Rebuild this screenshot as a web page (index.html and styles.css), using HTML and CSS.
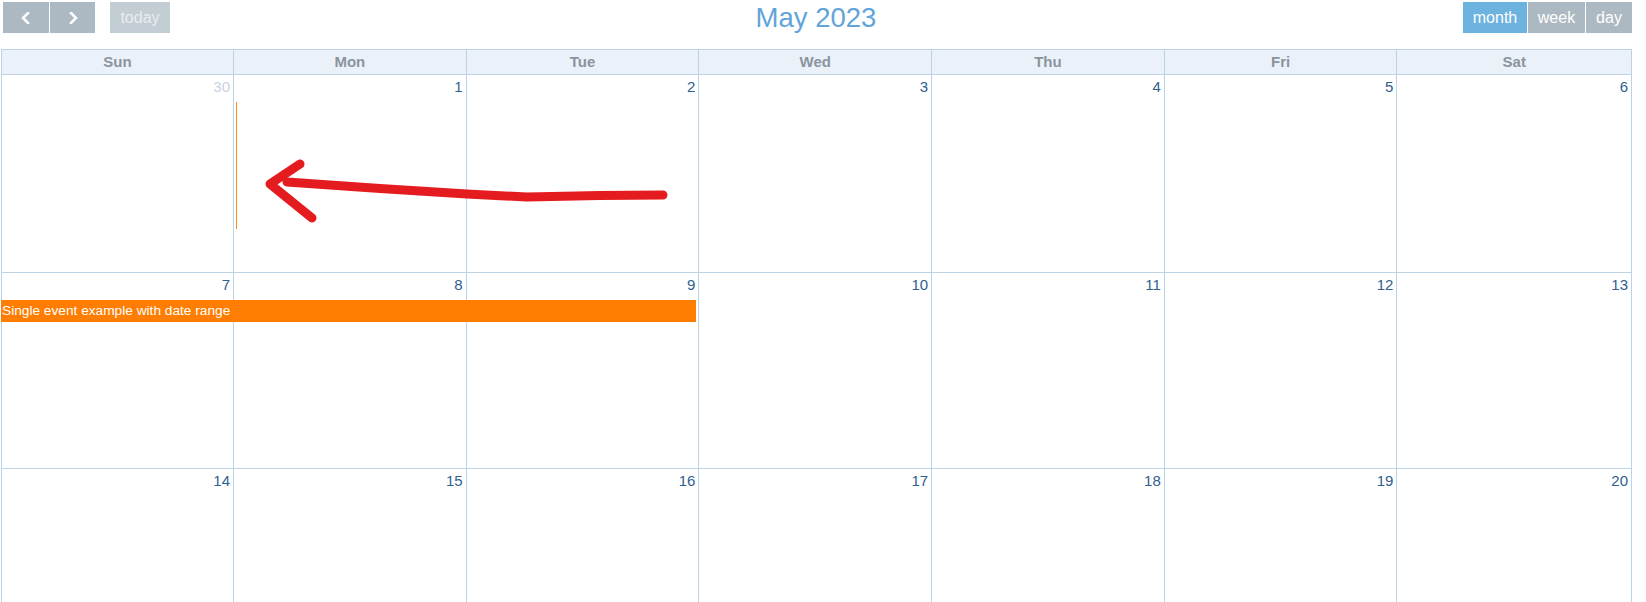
FILE: index.html
```html
<!DOCTYPE html>
<html lang="en">
<head>
<meta charset="utf-8">
<title>Calendar</title>
<link rel="stylesheet" href="styles.css">
</head>
<body>
<div class="page">
  <div class="toolbar">
    <div class="tb-left">
      <div class="btn-group">
        <button class="btn btn-nav" aria-label="prev">
          <svg width="12" height="12" viewBox="0 0 12 12"><path d="M8 1 L3 6 L8 11" fill="none" stroke="#fff" stroke-width="2.6" stroke-linecap="square" stroke-linejoin="miter"/></svg>
        </button>
        <button class="btn btn-nav" aria-label="next">
          <svg width="12" height="12" viewBox="0 0 12 12"><path d="M4 1 L9 6 L4 11" fill="none" stroke="#fff" stroke-width="2.6" stroke-linecap="square" stroke-linejoin="miter"/></svg>
        </button>
      </div>
      <button class="btn btn-today">today</button>
    </div>
    <h2 class="title">May 2023</h2>
    <div class="tb-right">
      <div class="btn-group">
        <button class="btn btn-active btn-month">month</button>
        <button class="btn btn-week">week</button>
        <button class="btn btn-day">day</button>
      </div>
    </div>
  </div>

  <div class="cal">
    <div class="head">
      <div class="hcell">Sun</div>
      <div class="hcell">Mon</div>
      <div class="hcell">Tue</div>
      <div class="hcell">Wed</div>
      <div class="hcell">Thu</div>
      <div class="hcell">Fri</div>
      <div class="hcell">Sat</div>
    </div>
    <div class="body">
      <div class="week">
        <div class="day c1"><span class="num other">30</span></div>
        <div class="day c2"><span class="num">1</span></div>
        <div class="day c3"><span class="num">2</span></div>
        <div class="day c4"><span class="num">3</span></div>
        <div class="day c5"><span class="num">4</span></div>
        <div class="day c6"><span class="num">5</span></div>
        <div class="day c7"><span class="num">6</span></div>
        <div class="thin-event"></div>
      </div>
      <div class="week">
        <div class="day c1"><span class="num">7</span></div>
        <div class="day c2"><span class="num">8</span></div>
        <div class="day c3"><span class="num">9</span></div>
        <div class="day c4"><span class="num">10</span></div>
        <div class="day c5"><span class="num">11</span></div>
        <div class="day c6"><span class="num">12</span></div>
        <div class="day c7"><span class="num">13</span></div>
        <div class="event">Single event example with date range</div>
      </div>
      <div class="week">
        <div class="day c1"><span class="num">14</span></div>
        <div class="day c2"><span class="num">15</span></div>
        <div class="day c3"><span class="num">16</span></div>
        <div class="day c4"><span class="num">17</span></div>
        <div class="day c5"><span class="num">18</span></div>
        <div class="day c6"><span class="num">19</span></div>
        <div class="day c7"><span class="num">20</span></div>
      </div>
    </div>
  </div>

  <svg class="annotation" width="1646" height="602" viewBox="0 0 1646 602">
    <path d="M663 195 L600 195.5 L527 197 L467 194 L380 188.5 L287 182" fill="none" stroke="#e51c1f" stroke-width="9" stroke-linecap="round" stroke-linejoin="round"/>
    <path d="M300 164 L270 184 L312 218" fill="none" stroke="#e51c1f" stroke-width="9" stroke-linecap="round" stroke-linejoin="round"/>
  </svg>
</div>
</body>
</html>
```

FILE: styles.css
```css
html, body {
  margin: 0;
  padding: 0;
  overflow: hidden;
  background: #fff;
}

body {
  font-family: "Liberation Sans", Arial, sans-serif;
  font-size: 16px;
}

.page {
  position: relative;
  width: 1646px;
  height: 602px;
}

.toolbar {
  display: flex;
  align-items: flex-start;
  justify-content: space-between;
  padding: 2px 14px 0 3px;
  height: 31px;
  margin-bottom: 16px;
  position: relative;
}

.tb-left {
  display: flex;
  gap: 15px;
}

.btn-group {
  display: flex;
  gap: 1px;
}

.btn {
  border: 0;
  margin: 0;
  height: 31px;
  padding: 0;
  font-family: "Liberation Sans", Arial, sans-serif;
  font-size: 16px;
  line-height: 31px;
  color: #fff;
  background: #adb9c2;
  text-align: center;
  cursor: pointer;
}

.btn-nav {
  width: 46px;
  display: flex;
  align-items: center;
  justify-content: center;
}

.btn-nav + .btn-nav {
  width: 45px;
}

.btn-today {
  width: 60px;
  background: #c3cdd4;
  color: #e9edf0;
}

.btn-active {
  background: #6cb3e0;
}

.btn-month { width: 64px; }
.btn-week { width: 57px; }
.btn-day { width: 46px; }

.title {
  position: absolute;
  left: 0;
  right: 14px;
  top: 2px;
  margin: 0;
  text-align: center;
  font-weight: normal;
  font-size: 27.5px;
  line-height: 31px;
  color: #62a4d9;
  pointer-events: none;
}

.cal {
  margin-left: 1px;
  width: 1631px;
  box-sizing: border-box;
  border: 1px solid #bcd3e6;
  border-bottom: 0;
}

.head {
  display: grid;
  grid-template-columns: 231px repeat(5, 232.7px) 1fr;
  background: #ebf1f8;
  border-bottom: 1px solid #bcd3e6;
}

.hcell {
  height: 24px;
  line-height: 24px;
  text-align: center;
  font-weight: bold;
  font-size: 15px;
  color: #8a949e;
}

.hcell + .hcell {
  border-left: 1px solid #bcd3e6;
}

.body {
  display: grid;
  grid-template-rows: 198px 196px 196px;
}

.week {
  display: grid;
  grid-template-columns: 231px repeat(5, 232.7px) 1fr;
  grid-template-rows: 27px 22px 1fr;
  border-bottom: 1px solid #bcd3e6;
}

.day {
  grid-row: 1 / -1;
  text-align: right;
  padding: 3px 3px 0 0;
}

.day + .day {
  border-left: 1px solid #bcd3e6;
}

.c1 { grid-column: 1; }
.c2 { grid-column: 2; }
.c3 { grid-column: 3; }
.c4 { grid-column: 4; }
.c5 { grid-column: 5; }
.c6 { grid-column: 6; }
.c7 { grid-column: 7; }

.num {
  font-size: 15px;
  color: #30608e;
}

.num.other {
  color: #c6d3df;
}

.event {
  grid-row: 2;
  grid-column: 1 / 4;
  margin-left: -1px;
  margin-right: 2px;
  background: #ff7d00;
  color: #fff;
  font-size: 13.7px;
  line-height: 22px;
  padding-left: 1px;
  white-space: nowrap;
  overflow: hidden;
  z-index: 1;
}

.thin-event {
  grid-row: 2 / 4;
  grid-column: 2;
  align-self: start;
  justify-self: start;
  margin-left: 3px;
  width: 1px;
  height: 127px;
  background: #ff8a1a;
  z-index: 1;
}

.annotation {
  position: absolute;
  left: 0;
  top: 0;
  pointer-events: none;
  z-index: 5;
}
```
